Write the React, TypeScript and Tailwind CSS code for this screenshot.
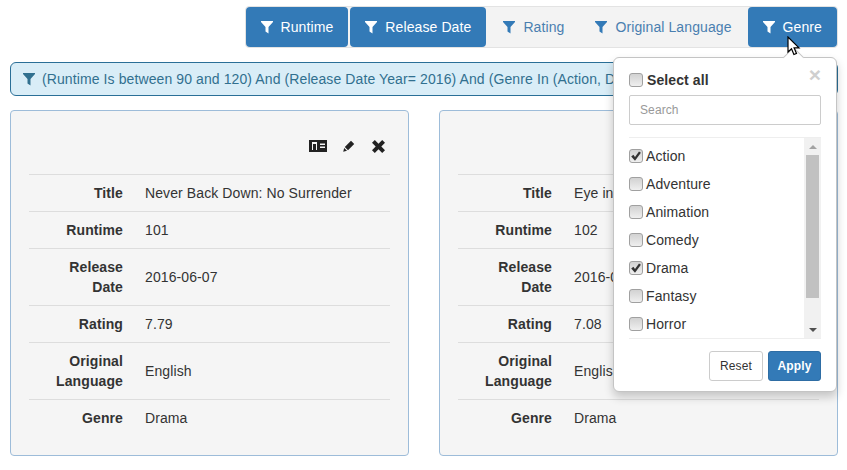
import React from 'react';

const Funnel = ({ className }: { className: string }) => (
  <svg viewBox="0 0 12 14" className={`w-[12px] h-[14px] ${className}`} fill="currentColor">
    <path d="M0 1h12v1L7.5 7v6.5L4.5 11.5V7L0 2z" />
  </svg>
);

const FilterButton = ({ label, active, className = '' }: { label: string; active?: boolean; className?: string }) => (
  <div
    className={`flex items-center h-[40px] px-[15px] gap-[8px] rounded-[4px] ${className} ${
      active ? 'bg-[#337ab7] text-white' : 'text-[#4a7fb0]'
    }`}
  >
    <Funnel className={active ? 'text-white' : 'text-[#337ab7]'} />
    <span>{label}</span>
  </div>
);

const Row = ({ label, value }: { label: React.ReactNode; value: string }) => (
  <div className="flex items-center border-t border-[#ddd] py-[8px]">
    <div className="w-[94px] pl-[10px] text-right font-bold text-[#333] shrink-0">{label}</div>
    <div className="ml-[22px] text-[#333] whitespace-nowrap">{value}</div>
  </div>
);

const CardIcon = () => (
  <svg viewBox="0 0 18 14" className="w-[18px] h-[14px]">
    <path fill="#222" d="M0 1h18v12H0z" />
    <path fill="#f5f5f5" d="M3 3h5v8H7V5H4v6H3zM11 4.5h5V6h-5zM11 7.5h5V9h-5z" />
  </svg>
);

const PencilIcon = () => (
  <svg viewBox="0 0 12 12" className="w-[12px] h-[12px]" fill="#222">
    <path d="M8 .8 11.2 4 5 10.2 1.8 7zM1.2 8l2.8 2.8-3.8 1z" />
  </svg>
);

const RemoveIcon = () => (
  <svg viewBox="0 0 12 12" className="w-[13px] h-[13px]" fill="#222">
    <path d="M2.6 0 6 3.4 9.4 0 12 2.6 8.6 6 12 9.4 9.4 12 6 8.6 2.6 12 0 9.4 3.4 6 0 2.6z" />
  </svg>
);

const MovieCard = ({ title, runtime, date, rating }: { title: string; runtime: string; date: string; rating: string }) => (
  <div className="w-[399px] h-[346px] bg-[#f5f5f5] border border-[#9dbcd9] rounded-[4px] px-[18px] pt-[26px] shrink-0">
    <div className="flex items-center justify-end h-[18px] pr-[5px] mb-[19px]">
      <CardIcon />
      <div className="ml-[16px]">
        <PencilIcon />
      </div>
      <div className="ml-[17px]">
        <RemoveIcon />
      </div>
    </div>
    <Row label="Title" value={title} />
    <Row label="Runtime" value={runtime} />
    <Row label="Release Date" value={date} />
    <Row label="Rating" value={rating} />
    <Row label="Original Language" value="English" />
    <Row label="Genre" value="Drama" />
  </div>
);

const Check = ({ checked }: { checked?: boolean }) => (
  <span className="relative w-[14px] h-[14px] rounded-[3px] border border-[#a0a0a0] bg-linear-to-b from-[#d2d2d2] to-[#efefef] shrink-0">
    {checked && (
      <svg viewBox="0 0 12 12" className="absolute left-0 top-0 w-[12px] h-[12px] text-[#333]" fill="currentColor">
        <path d="M1.2 6.5 3.4 4.8 5 7l4-5.6 1.9 1.3L5 10.8z" />
      </svg>
    )}
  </span>
);

const genres: [string, boolean][] = [
  ['Action', true],
  ['Adventure', false],
  ['Animation', false],
  ['Comedy', false],
  ['Drama', true],
  ['Fantasy', false],
  ['Horror', false],
];

const Popover = () => (
  <div className="absolute left-[613px] top-[57px] w-[224px] h-[335px] bg-white border border-[#c4c4c4] rounded-[6px] shadow-[0_5px_10px_rgba(0,0,0,0.2)] px-[15px] pt-[13px]">
    <div className="absolute left-[172px] -top-[8px] w-[15px] h-[15px] rotate-45 bg-white border-l border-t border-[#c4c4c4]" />
    <div className="absolute right-[15px] top-[8px] text-[#cfcfcf] font-bold text-[21px] leading-[18px]">×</div>
    <div className="relative flex items-center gap-[4px] h-[18px] mb-[6px]">
      <Check />
      <span className="font-bold text-[#333]">Select all</span>
    </div>
    <div className="h-[30px] border border-[#ccc] rounded-[2px] px-[10px] flex items-center text-[12px] text-[#999] mt-[6px]">
      Search
    </div>
    <div className="mt-[12px] flex h-[202px] border-t border-b border-[#eee]">
      <div className="flex-1 pt-[4px]">
        {genres.map(([name, on]) => (
          <div key={name} className="flex items-center gap-[3px] h-[28px] text-[#333]">
            <Check checked={on} />
            <span>{name}</span>
          </div>
        ))}
      </div>
      <div className="w-[17px] bg-[#f1f1f1] flex flex-col items-center">
        <div className="h-[17px] flex items-center justify-center">
          <span className="w-0 h-0 border-x-[4px] border-x-transparent border-b-[4px] border-b-[#a3a3a3]" />
        </div>
        <div className="w-[13px] h-[143px] bg-[#c1c1c1]" />
        <div className="flex-1 flex items-end pb-[6px]">
          <span className="w-0 h-0 border-x-[4px] border-x-transparent border-t-[4px] border-t-[#505050]" />
        </div>
      </div>
    </div>
    <div className="flex justify-end gap-[5px] mt-[12px]">
      <div className="w-[54px] h-[30px] border border-[#ccc] rounded-[3px] flex items-center justify-center text-[12px] text-[#333]">
        Reset
      </div>
      <div className="w-[53px] h-[30px] bg-[#337ab7] border border-[#2e6da4] rounded-[3px] flex items-center justify-center text-[12px] font-bold text-white">
        Apply
      </div>
    </div>
  </div>
);

export default function App() {
  return (
    <div className="relative w-[847px] h-[470px] overflow-hidden bg-white text-[14px] leading-[20px] tracking-[0.1px] font-['Liberation_Sans',Arial,sans-serif]">
      <div className="flex justify-end pt-[6px] pr-[9px]">
        <div className="flex h-[42px] bg-[#f3f3f3] border border-[#e3e3e3] rounded-[4px]">
          <FilterButton label="Runtime" active />
          <FilterButton label="Release Date" active className="ml-[2px]" />
          <FilterButton label="Rating" className="ml-[2px]" />
          <FilterButton label="Original Language" className="ml-[1px]" />
          <FilterButton label="Genre" active className="ml-[1px]" />
        </div>
      </div>
      <div className="mx-[10px] mt-[14px] w-[828px] h-[34px] bg-[#d9edf7] border border-[#2a6f97] rounded-[6px] flex items-center pl-[12px] gap-[7px] text-[#31708f] whitespace-nowrap overflow-hidden">
        <Funnel className="text-[#31708f]" />
        <span>(Runtime Is between 90 and 120) And (Release Date Year= 2016) And (Genre In (Action, Drama))</span>
      </div>
      <div className="flex gap-[30px] mt-[14px] ml-[10px]">
        <MovieCard title="Never Back Down: No Surrender" runtime="101" date="2016-06-07" rating="7.79" />
        <MovieCard title="Eye in the Sky" runtime="102" date="2016-03-11" rating="7.08" />
      </div>
      <Popover />
      <svg viewBox="0 0 14 21" className="absolute left-[787px] top-[36px] w-[14px] h-[21px]">
        <path d="M1 1v15l3.5-3.3 2.4 5.8 2.6-1.1-2.4-5.6H12z" fill="#fff" stroke="#000" strokeWidth="1.2" />
      </svg>
    </div>
  );
}
